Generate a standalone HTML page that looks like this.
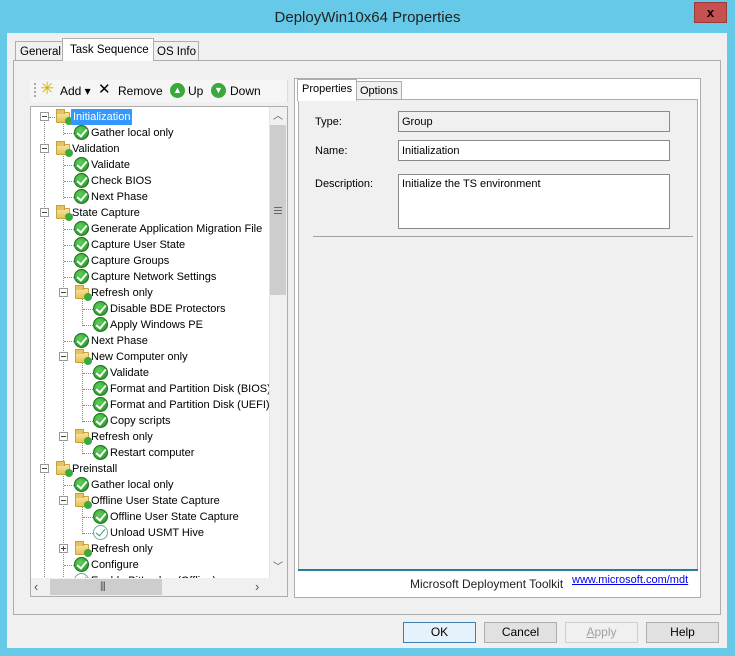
<!DOCTYPE html>
<html><head><meta charset="utf-8"><style>
*{box-sizing:border-box;margin:0;padding:0}
body{width:735px;height:656px;background:#66c9e8;font-family:"Liberation Sans",sans-serif;font-size:11px;color:#000;position:relative;overflow:hidden}
.a{position:absolute}
.t{position:absolute;white-space:nowrap;line-height:16px;height:16px}
.ck{position:absolute;width:15px;height:15px;border-radius:50%;background:radial-gradient(circle at 40% 35%,#5fd05a,#1f8f1f);border:1px solid #1a6e1a}
.ck::after{content:"";position:absolute;left:4px;top:1px;width:4px;height:8px;border:solid #fff;border-width:0 2.5px 2.5px 0;transform:rotate(40deg)}
.dk{background:#fff;border:1px solid #6a9;}
.dk::after{border-color:#3a9a5a;border-width:0 1.5px 1.5px 0}
.fd{position:absolute;width:14px;height:11px;background:linear-gradient(#f8e49a,#e6c25a);border:1px solid #c9a240;border-radius:1px}
.fd::before{content:"";position:absolute;left:-1px;top:-4px;width:7px;height:4px;background:#e6c25a;border:1px solid #c9a240;border-bottom:0}
.fd::after{content:"";position:absolute;right:-4px;bottom:-3px;width:8px;height:8px;border-radius:50%;background:#3aaa3a}
.ex{position:absolute;width:9px;height:9px;border:1px solid #999;background:#fff}
.ex::after{content:"";position:absolute;left:1px;top:3px;width:5px;height:1px;background:#444}
.ex.p::before{content:"";position:absolute;left:3px;top:1px;width:1px;height:5px;background:#444}
.vl{position:absolute;border-left:1px dotted #888;width:0}
.hl{position:absolute;border-top:1px dotted #888;height:0}
.btn{position:absolute;top:622px;height:21px;width:73px;border:1px solid #adadad;background:#e1e1e1;text-align:center;line-height:19px;font-size:12px}
</style></head><body>
<div class="t" style="left:0;width:735px;top:9px;text-align:center;font-size:15px;line-height:18px;height:18px;color:#222">DeployWin10x64 Properties</div>
<div class="a" style="left:694px;top:2px;width:33px;height:21px;background:#c75050;border:1px solid #9a3a3a;color:#000;font-weight:bold;text-align:center;line-height:19px;font-size:13px">x</div>
<div class="a" style="left:7px;top:33px;width:720px;height:615px;background:#f0f0f0"></div>
<!-- tabs -->
<div class="a" style="left:15px;top:41px;width:48px;height:20px;border:1px solid #adadad;background:#f0f0f0"></div>
<div class="t" style="left:20px;top:44px;font-size:11.5px">General</div>
<div class="a" style="left:153px;top:41px;width:46px;height:20px;border:1px solid #adadad;background:#f0f0f0"></div>
<div class="t" style="left:157px;top:44px;font-size:11.5px">OS Info</div>
<div class="a" style="left:13px;top:60px;width:708px;height:555px;border:1px solid #adadad;background:#fff"></div>
<div class="a" style="left:62px;top:38px;width:92px;height:24px;border:1px solid #adadad;border-bottom:0;background:#fff"></div>
<div class="t" style="left:70px;top:42px;font-size:11.5px">Task Sequence</div>
<div class="a" style="left:14px;top:61px;width:706px;height:553px;background:#f0f0f0"></div>
<!-- toolbar -->
<div class="a" style="left:30px;top:80px;width:258px;height:22px;background:#f5f5f5;border-right:1px solid #ddd"></div>
<div class="a" style="left:34px;top:83px;height:14px;border-left:2px dotted #aaa"></div>
<div class="t" style="left:40px;top:81px;font-size:17px;color:#d8b000">✳</div>
<div class="t" style="left:60px;top:83px;font-size:12px">Add ▾</div>
<div class="t" style="left:98px;top:82px;font-size:15px">✕</div>
<div class="t" style="left:118px;top:83px;font-size:12px">Remove</div>
<div class="a" style="left:170px;top:83px;width:15px;height:15px;border-radius:50%;background:#3aa83a;color:#fff;font-size:9px;text-align:center;line-height:15px">▲</div>
<div class="t" style="left:188px;top:83px;font-size:12px">Up</div>
<div class="a" style="left:211px;top:83px;width:15px;height:15px;border-radius:50%;background:#3aa83a;color:#fff;font-size:9px;text-align:center;line-height:15px">▼</div>
<div class="t" style="left:230px;top:83px;font-size:12px">Down</div>
<!-- tree box -->
<div class="a" style="left:30px;top:106px;width:258px;height:491px;border:1px solid #adadad;background:#fff;overflow:hidden"></div>
<div class="a" style="left:31px;top:108px;width:238px;height:470px;overflow:hidden">
<div class="vl" style="left:13px;top:9px;height:470px"></div>
<div class="vl" style="left:32px;top:105px;height:250px"></div>
<div class="vl" style="left:32px;top:9px;height:18px"></div>
<div class="vl" style="left:32px;top:41px;height:50px"></div>
<div class="vl" style="left:51px;top:185px;height:33px"></div>
<div class="vl" style="left:51px;top:249px;height:65px"></div>
<div class="vl" style="left:51px;top:329px;height:17px"></div>
<div class="vl" style="left:32px;top:361px;height:120px"></div>
<div class="vl" style="left:51px;top:393px;height:33px"></div>
</div>
<div class="a" style="left:31px;top:108px;width:238px;height:470px;overflow:hidden">
<div class="ex" style="left:9px;top:4px"></div><div class="hl" style="left:18px;top:9px;width:6px"></div><div class="fd" style="left:25px;top:4px"></div><div class="t" style="left:40px;top:1px;background:#3399ff;color:#fff;padding:0 2px">Initialization</div>
<div class="hl" style="left:33px;top:25px;width:10px"></div><div class="ck" style="left:43px;top:17px"></div><div class="t" style="left:60px;top:17px">Gather local only</div>
<div class="ex" style="left:9px;top:36px"></div><div class="fd" style="left:25px;top:36px"></div><div class="t" style="left:41px;top:33px">Validation</div>
<div class="hl" style="left:33px;top:57px;width:10px"></div><div class="ck" style="left:43px;top:49px"></div><div class="t" style="left:60px;top:49px">Validate</div>
<div class="hl" style="left:33px;top:73px;width:10px"></div><div class="ck" style="left:43px;top:65px"></div><div class="t" style="left:60px;top:65px">Check BIOS</div>
<div class="hl" style="left:33px;top:89px;width:10px"></div><div class="ck" style="left:43px;top:81px"></div><div class="t" style="left:60px;top:81px">Next Phase</div>
<div class="ex" style="left:9px;top:100px"></div><div class="fd" style="left:25px;top:100px"></div><div class="t" style="left:41px;top:97px">State Capture</div>
<div class="hl" style="left:33px;top:121px;width:10px"></div><div class="ck" style="left:43px;top:113px"></div><div class="t" style="left:60px;top:113px">Generate Application Migration File</div>
<div class="hl" style="left:33px;top:137px;width:10px"></div><div class="ck" style="left:43px;top:129px"></div><div class="t" style="left:60px;top:129px">Capture User State</div>
<div class="hl" style="left:33px;top:153px;width:10px"></div><div class="ck" style="left:43px;top:145px"></div><div class="t" style="left:60px;top:145px">Capture Groups</div>
<div class="hl" style="left:33px;top:169px;width:10px"></div><div class="ck" style="left:43px;top:161px"></div><div class="t" style="left:60px;top:161px">Capture Network Settings</div>
<div class="ex" style="left:28px;top:180px"></div><div class="fd" style="left:44px;top:180px"></div><div class="t" style="left:60px;top:177px">Refresh only</div>
<div class="hl" style="left:52px;top:201px;width:10px"></div><div class="ck" style="left:62px;top:193px"></div><div class="t" style="left:79px;top:193px">Disable BDE Protectors</div>
<div class="hl" style="left:52px;top:217px;width:10px"></div><div class="ck" style="left:62px;top:209px"></div><div class="t" style="left:79px;top:209px">Apply Windows PE</div>
<div class="hl" style="left:33px;top:233px;width:10px"></div><div class="ck" style="left:43px;top:225px"></div><div class="t" style="left:60px;top:225px">Next Phase</div>
<div class="ex" style="left:28px;top:244px"></div><div class="fd" style="left:44px;top:244px"></div><div class="t" style="left:60px;top:241px">New Computer only</div>
<div class="hl" style="left:52px;top:265px;width:10px"></div><div class="ck" style="left:62px;top:257px"></div><div class="t" style="left:79px;top:257px">Validate</div>
<div class="hl" style="left:52px;top:281px;width:10px"></div><div class="ck" style="left:62px;top:273px"></div><div class="t" style="left:79px;top:273px">Format and Partition Disk (BIOS)</div>
<div class="hl" style="left:52px;top:297px;width:10px"></div><div class="ck" style="left:62px;top:289px"></div><div class="t" style="left:79px;top:289px">Format and Partition Disk (UEFI)</div>
<div class="hl" style="left:52px;top:313px;width:10px"></div><div class="ck" style="left:62px;top:305px"></div><div class="t" style="left:79px;top:305px">Copy scripts</div>
<div class="ex" style="left:28px;top:324px"></div><div class="fd" style="left:44px;top:324px"></div><div class="t" style="left:60px;top:321px">Refresh only</div>
<div class="hl" style="left:52px;top:345px;width:10px"></div><div class="ck" style="left:62px;top:337px"></div><div class="t" style="left:79px;top:337px">Restart computer</div>
<div class="ex" style="left:9px;top:356px"></div><div class="fd" style="left:25px;top:356px"></div><div class="t" style="left:41px;top:353px">Preinstall</div>
<div class="hl" style="left:33px;top:377px;width:10px"></div><div class="ck" style="left:43px;top:369px"></div><div class="t" style="left:60px;top:369px">Gather local only</div>
<div class="ex" style="left:28px;top:388px"></div><div class="fd" style="left:44px;top:388px"></div><div class="t" style="left:60px;top:385px">Offline User State Capture</div>
<div class="hl" style="left:52px;top:409px;width:10px"></div><div class="ck" style="left:62px;top:401px"></div><div class="t" style="left:79px;top:401px">Offline User State Capture</div>
<div class="hl" style="left:52px;top:425px;width:10px"></div><div class="ck dk" style="left:62px;top:417px"></div><div class="t" style="left:79px;top:417px">Unload USMT Hive</div>
<div class="ex p" style="left:28px;top:436px"></div><div class="fd" style="left:44px;top:436px"></div><div class="t" style="left:60px;top:433px">Refresh only</div>
<div class="hl" style="left:33px;top:457px;width:10px"></div><div class="ck" style="left:43px;top:449px"></div><div class="t" style="left:60px;top:449px">Configure</div>
<div class="ck dk" style="left:43px;top:465px"></div><div class="t" style="left:60px;top:465px">Enable BitLocker (Offline)</div>
</div>
<!-- vscroll -->
<div class="a" style="left:269px;top:107px;width:18px;height:471px;background:#f0f0f0;border-left:1px solid #e4e4e4"></div>
<div class="t" style="left:269px;top:109px;width:18px;text-align:center;font-size:10px;color:#555">︿</div>
<div class="a" style="left:270px;top:125px;width:16px;height:170px;background:#cdcdcd"></div>
<div class="a" style="left:274px;top:207px;width:8px;height:7px;border-top:1px solid #666;border-bottom:1px solid #666"><div style="margin-top:2px;border-top:1px solid #666"></div></div>
<div class="t" style="left:269px;top:560px;width:18px;text-align:center;font-size:10px;color:#555">﹀</div>
<!-- hscroll -->
<div class="a" style="left:31px;top:578px;width:256px;height:18px;background:#f0f0f0"></div>
<div class="t" style="left:34px;top:579px;font-size:13px;color:#555">‹</div>
<div class="a" style="left:50px;top:579px;width:112px;height:16px;background:#cdcdcd"></div>
<div class="t" style="left:100px;top:579px;font-size:10px;color:#555;letter-spacing:-1px">|||</div>
<div class="t" style="left:255px;top:579px;font-size:13px;color:#555">›</div>
<!-- right panel -->
<div class="a" style="left:294px;top:78px;width:407px;height:520px;border:1px solid #adadad;background:#fff"></div>
<div class="a" style="left:298px;top:99px;width:400px;height:472px;border:1px solid #adadad;background:#f0f0f0"></div>
<div class="a" style="left:356px;top:81px;width:46px;height:19px;border:1px solid #adadad;background:#f0f0f0"></div>
<div class="t" style="left:360px;top:83px">Options</div>
<div class="a" style="left:297px;top:79px;width:60px;height:22px;border:1px solid #adadad;border-bottom:0;background:#fff"></div>
<div class="t" style="left:302px;top:81px">Properties</div>
<div class="t" style="left:315px;top:114px">Type:</div>
<div class="a" style="left:398px;top:111px;width:272px;height:21px;border:1px solid #8a8a8a;background:#f0f0f0"></div>
<div class="t" style="left:402px;top:114px">Group</div>
<div class="t" style="left:315px;top:143px">Name:</div>
<div class="a" style="left:398px;top:140px;width:272px;height:21px;border:1px solid #8a8a8a;background:#fff"></div>
<div class="t" style="left:402px;top:143px">Initialization</div>
<div class="t" style="left:315px;top:176px">Description:</div>
<div class="a" style="left:398px;top:174px;width:272px;height:55px;border:1px solid #8a8a8a;background:#fff"></div>
<div class="t" style="left:402px;top:176px">Initialize the TS environment</div>
<div class="a" style="left:313px;top:236px;width:380px;height:1px;background:#a0a0a0"></div>
<div class="a" style="left:298px;top:569px;width:400px;height:2px;background:#2a7a9a"></div>
<div class="t" style="left:410px;top:576px;color:#222;font-size:12px">Microsoft Deployment Toolkit</div>
<div class="t" style="left:572px;top:572px;color:#00e;text-decoration:underline">www.microsoft.com/mdt</div>
<!-- buttons -->
<div class="btn" style="left:403px;border-color:#3c7fb1;background:#e5f1fb">OK</div>
<div class="btn" style="left:484px">Cancel</div>
<div class="btn" style="left:565px;color:#a0a0a0;border-color:#cfcfcf;background:#f0f0f0"><u>A</u>pply</div>
<div class="btn" style="left:646px">Help</div>
</body></html>
